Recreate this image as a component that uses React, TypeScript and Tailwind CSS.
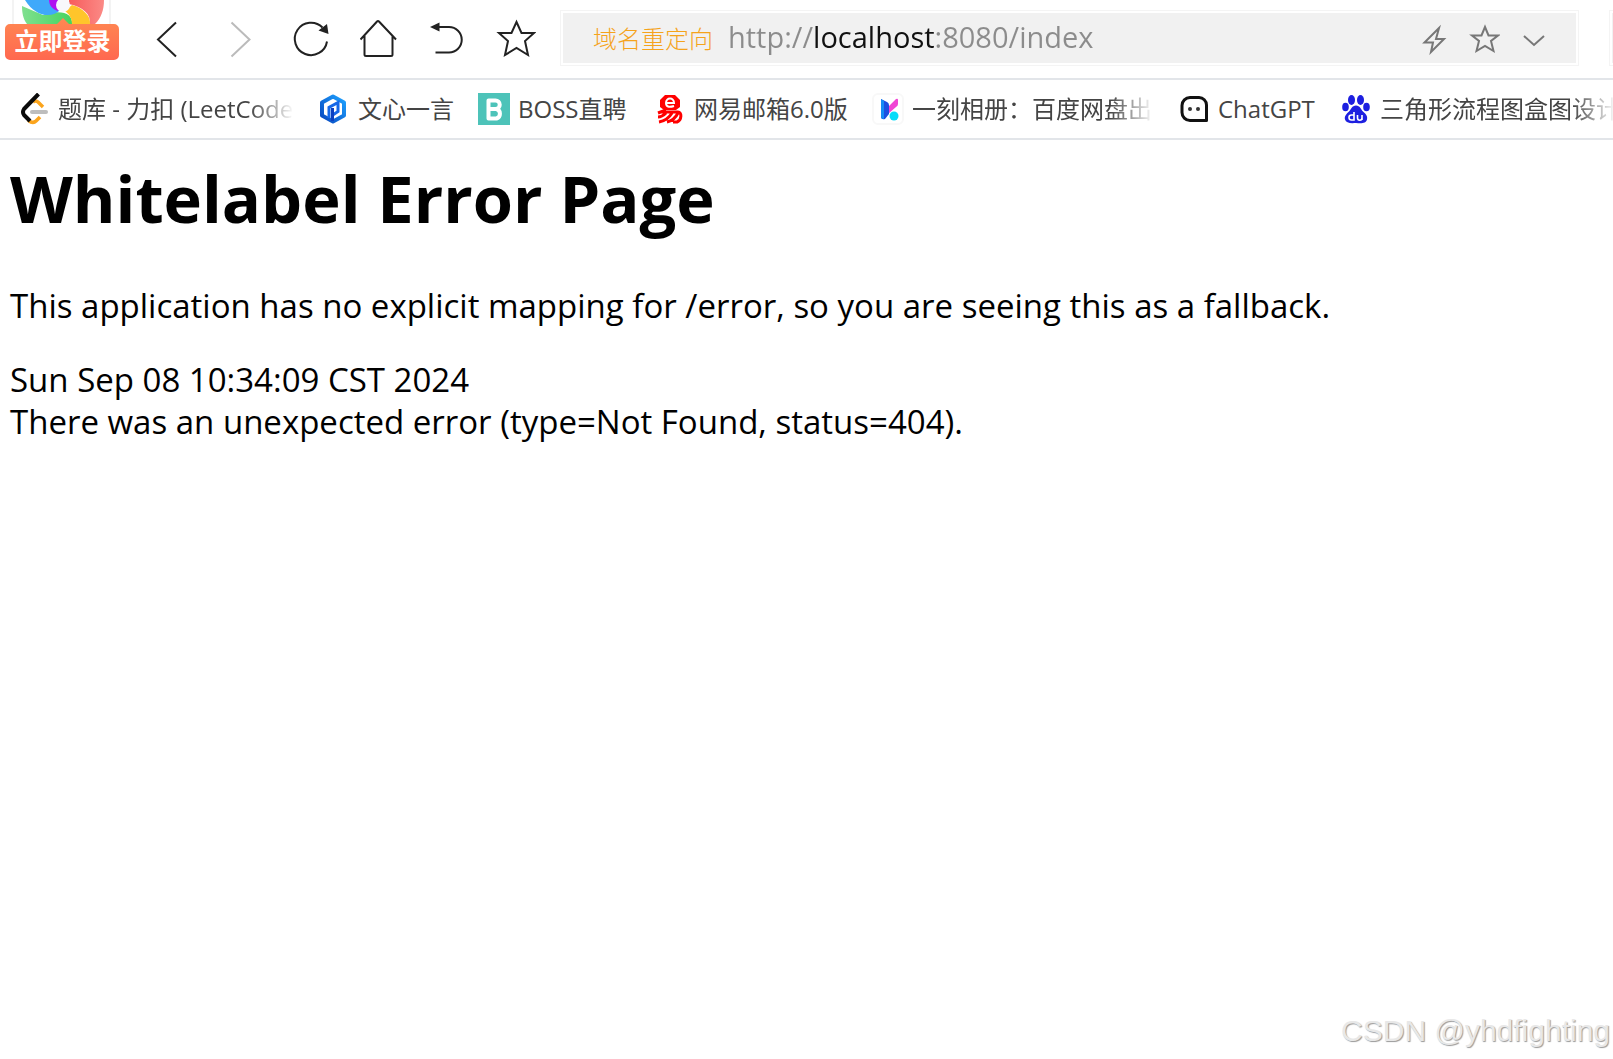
import type { ReactNode } from 'react';

function LeetCodeIcon() {
  return (
    <svg viewBox="0 0 32 32" className="size-8" fill="none">
      <path d="M10 27l3 2q3 1 5-1l4-4" stroke="#fba41c" strokeWidth="3.6" />
      <path d="M15 9q3-2 5 0l5 5" stroke="#fba41c" strokeWidth="3.4" />
      <path d="M20.500 1L6 16q-2 3 0 6l6 6" stroke="#0a0a0a" strokeWidth="4" strokeLinejoin="round" />
      <path d="M14 19h14" stroke="#bdbdbd" strokeWidth="4" strokeLinecap="round" />
    </svg>
  );
}

function WenxinIcon() {
  return (
    <svg viewBox="0 0 32 32" className="size-8">
      <defs>
        <linearGradient id="wenxin" x1="0" y1="1" x2="1" y2="0">
          <stop offset="0" stopColor="#0848c0" />
          <stop offset="1" stopColor="#1ea2ff" />
        </linearGradient>
      </defs>
      <path
        d="M15 3.500L26 9.500v13L15 28.500 4 22.500v-13z"
        fill="#fff"
        stroke="url(#wenxin)"
        strokeWidth="4"
        strokeLinejoin="round"
      />
      <path d="M11 25V14.500L20 9.500v9L14 22.500" fill="none" stroke="#1668e8" strokeWidth="3" />
      <path d="M14.500 15v13" stroke="#0b3fc0" strokeWidth="3" />
    </svg>
  );
}

function BossIcon() {
  return (
    <svg viewBox="0 0 32 32" className="size-8">
      <rect width="32" height="32" fill="#4dc3b9" />
      <path
        d="M10.500 7.500h7a4 4 0 0 1 0 8.500h-7zM10.500 16h8a5 5 0 0 1 0 9.500h-8z"
        fill="none"
        stroke="#fff"
        strokeWidth="4"
        strokeLinejoin="round"
      />
    </svg>
  );
}

function NeteaseIcon() {
  return (
    <svg viewBox="0 0 32 32" className="size-8" fill="none">
      <path d="M11 2h10l5 5v7l-4 3H10l-4-3V7z" fill="#f00" />
      <path d="M12 10h8c0-6-8-6-8 0 0 5 5 4 8 3" stroke="#fff" strokeWidth="2" />
      <path
        d="M4 20l8-3M8 19h16c4 0 4 8-1 10h-4M12 20c-2 2-4 4-8 4M18 20c-3 5-7 8-13 9M24 20c-2 4-6 8-11 9"
        stroke="#f00"
        strokeWidth="3"
      />
    </svg>
  );
}

function YikeIcon() {
  return (
    <svg viewBox="0 0 32 32" className="size-8">
      <rect x="1" y="1" width="30" height="30" rx="5" fill="#fff" stroke="#f8f8f8" strokeWidth="2" />
      <path d="M17 13l7-7q2-1 2 1v4q0 2-2 3l-8 7z" fill="#f044d4" />
      <path d="M9 6l6 3q2 1 2 3v9l-4 5q-4 1-4-2z" fill="#1d50e0" />
      <path d="M9 6l3 2v18q-3 0-3-3z" fill="#168bf5" />
      <circle cx="22" cy="23" r="4.500" fill="#06dcf9" />
    </svg>
  );
}

function ChatIcon() {
  return (
    <svg viewBox="0 0 32 32" className="size-8">
      <path
        d="M12 4.500h9a7.500 7.500 0 0 1 7.500 7.500v15.500H12a8 8 0 0 1-8-8V12.500a8 8 0 0 1 8-8z"
        fill="#fff"
        stroke="#111"
        strokeWidth="3"
        strokeLinejoin="round"
      />
      <circle cx="12" cy="16" r="2" fill="#333" />
      <circle cx="20" cy="16" r="2" fill="#333" />
    </svg>
  );
}

function BaiduIcon() {
  return (
    <svg viewBox="0 0 32 32" className="size-8" fill="#1d1fe0">
      <ellipse cx="11.500" cy="7" rx="3.500" ry="5" />
      <ellipse cx="20.500" cy="7" rx="3.500" ry="5" />
      <ellipse cx="5.500" cy="14" rx="3.300" ry="4.300" />
      <ellipse cx="26.500" cy="14" rx="3.300" ry="4.300" />
      <path d="M16 12.500c4 0 5 4 7 6s5 4 4 8-5 4-11 3.500C10 30.500 6 30 5 26.500s2-6 4-8 3-6 7-6z" />
      <path
        d="M14 19v8h-2.500a2.200 2.200 0 0 1 0-5H14M17.500 22v3c0 3 4.500 3 4.500 0v-3 5"
        fill="none"
        stroke="#fff"
        strokeWidth="1.600"
      />
    </svg>
  );
}

const bookmarks: { label: string; icon: ReactNode; width: string; fade?: boolean }[] = [
  { label: '题库 - 力扣 (LeetCode)', icon: <LeetCodeIcon />, width: 'w-[236px]', fade: true },
  { label: '文心一言', icon: <WenxinIcon />, width: 'w-24' },
  { label: 'BOSS直聘', icon: <BossIcon />, width: 'w-28' },
  { label: '网易邮箱6.0版', icon: <NeteaseIcon />, width: 'w-[154px]' },
  { label: '一刻相册：百度网盘出品', icon: <YikeIcon />, width: 'w-[242px]', fade: true },
  { label: 'ChatGPT', icon: <ChatIcon />, width: 'w-[98px]' },
  { label: '三角形流程图盒图设计', icon: <BaiduIcon />, width: 'w-[236px]', fade: true },
];

function NavButton({ label, children }: { label: string; children: ReactNode }) {
  return (
    <button type="button" aria-label={label} className="size-10 shrink-0">
      <svg viewBox="0 0 40 40" className="size-10" fill="none" stroke="#222" strokeWidth="2">
        {children}
      </svg>
    </button>
  );
}

function Account() {
  return (
    <button type="button" className="relative mr-9 h-[78px] w-[115px] shrink-0 self-start">
      <svg viewBox="0 0 115 78" className="absolute inset-0">
        <defs>
          <linearGradient id="badge" x1="0" y1="0" x2="0" y2="1">
            <stop offset="0" stopColor="#ff8852" />
            <stop offset="1" stopColor="#ff6850" />
          </linearGradient>
          <linearGradient id="leaf" x1="0" y1="0" x2="1" y2="0">
            <stop offset="0" stopColor="#7fe08f" />
            <stop offset="1" stopColor="#45d35f" />
          </linearGradient>
          <linearGradient id="rose" x1="0" y1="0" x2="1" y2="0">
            <stop offset="0" stopColor="#f75c5c" />
            <stop offset="1" stopColor="#fb8a86" />
          </linearGradient>
        </defs>
        <path d="M8 0v24M105 0v24" stroke="#f3f3f3" strokeWidth="2" />
        <path d="M17 6l21 9c18-6 30-2 29 9H22c-4-5-5-12-5-18z" fill="url(#leaf)" />
        <path d="M20 0h24c2 6 5 10 11 10-7 8-24 8-35-10z" fill="#3fa9fa" />
        <path d="M44 0h14l-5 11c-6-2-9-6-9-11z" fill="#b012f0" />
        <path d="M60 11l7-6c11 3 19 11 18 19H67c0-6-3-10-7-13z" fill="#ffc52b" />
        <path d="M64 0h35c0 10-3 18-9 24h-5c1-10-7-17-21-20z" fill="url(#rose)" />
        <circle cx="58" cy="5" r="7" fill="#f8f8fc" />
        <path
          d="M5 24h47l6-6 6 6h45a5 5 0 0 1 5 5v26a5 5 0 0 1-5 5H5a5 5 0 0 1-5-5V29a5 5 0 0 1 5-5z"
          fill="url(#badge)"
        />
      </svg>
      <span className="absolute inset-x-0 top-[23px] text-2xl leading-9 font-bold text-white">立即登录</span>
    </button>
  );
}

function Toolbar() {
  return (
    <div className="flex h-20 items-center border-b-2 border-[#e2e5e9] pl-[5px]">
      <Account />
      <nav className="flex shrink-0 gap-7">
        <NavButton label="后退">
          <path d="M20 3.500L2 20.500 20 37.500" />
        </NavButton>
        <NavButton label="前进">
          <path d="M7.500 3.500l18 17-18 17" stroke="#bbb" />
        </NavButton>
        <NavButton label="刷新">
          <path d="M35 22.500A16.200 16.200 0 1 1 30.500 8.500" />
          <path d="M26.500 11.500L35 5l1.500 10z" fill="#222" stroke="none" />
        </NavButton>
        <NavButton label="主页">
          <path d="M.5 20.500L17 2.500q1-1 2 0l17 18M4.500 17v18.500q0 1.500 1.500 1.500h25q1.500 0 1.500-1.500V17" />
        </NavButton>
        <NavButton label="恢复">
          <path d="M10 8h11a12.700 12.700 0 0 1 0 25.500H7.500" />
          <path d="M2 8l9.500-4.500v9z" fill="#222" stroke="none" />
        </NavButton>
        <NavButton label="收藏">
          <path d="M20.500 3l5 11H38l-9 8 3 14-11.500-7L9 36l3-14-9-8h12.500z" />
        </NavButton>
      </nav>
      <div className="mb-0.5 ml-6 flex h-14 min-w-0 grow items-center border border-[#f4f4f4] p-[2px]">
        <div className="flex h-[50px] min-w-0 grow items-center bg-[#f1f1f1] pr-[26px] pl-[30px]">
          <span className="shrink-0 pt-0.5 text-2xl font-light text-[#f5a31c]">域名重定向</span>
          <input
            type="text"
            aria-label="地址"
            defaultValue="http://localhost:8080/index"
            className="mb-0.5 ml-[15px] h-10 min-w-0 grow bg-[linear-gradient(90deg,#8c8c8c_86px,#111_86px,#111_207px,#8c8c8c_207px)] bg-clip-text text-[29px] text-transparent outline-none"
          />
          <div className="flex shrink-0 gap-[18px] pt-0.5">
            <button type="button" aria-label="极速模式">
              <svg viewBox="0 0 32 32" className="size-8" fill="none" stroke="#777" strokeWidth="2">
                <path d="M21 5L6.500 19.500H15L13 29l13-13h-8z" />
              </svg>
            </button>
            <button type="button" aria-label="添加收藏">
              <svg viewBox="0 0 32 32" className="size-8" fill="none" stroke="#777" strokeWidth="2">
                <path d="M17 4l3.500 8.500H30L23 18l2.500 10L17 23l-8.500 5L11 18l-7-5.500h9.500z" />
              </svg>
            </button>
            <button type="button" aria-label="展开">
              <svg viewBox="0 0 32 32" className="size-8" fill="none" stroke="#777" strokeWidth="2">
                <path d="M6 13l10 9 10-9" />
              </svg>
            </button>
          </div>
        </div>
      </div>
      <div className="mb-0.5 ml-[30px] h-14 w-1 shrink-0 border border-r-0 border-[#f4f4f4] p-[2px] pr-0">
        <div className="h-full bg-[#f1f1f1]" />
      </div>
    </div>
  );
}

function BookmarkBar() {
  return (
    <nav className="flex h-[60px] items-center gap-6 overflow-hidden border-b-2 border-[#e2e5e9] pl-[18px]">
      {bookmarks.map(({ label, icon, width, fade }) => (
        <a key={label} href="#" className="flex shrink-0 items-center gap-2 text-2xl text-[#444]">
          {icon}
          <span
            className={`${width} overflow-hidden whitespace-nowrap ${
              fade ? 'mask-r-from-[calc(100%-44px)] mask-r-to-100%' : ''
            }`}
          >
            {label}
          </span>
        </a>
      ))}
    </nav>
  );
}

export default function App() {
  return (
    <div className="flex min-h-screen flex-col bg-white font-['Open_Sans','Noto_Sans_CJK_SC',sans-serif]">
      <Toolbar />
      <BookmarkBar />
      <main className="px-[10px] pt-[14px] text-[33px] leading-[42px] text-black">
        <h1 className="text-[65px] leading-[88px] font-bold">Whitelabel Error Page</h1>
        <p className="mt-[43px]">
          This application has no explicit mapping for /error, so you are seeing this as a fallback.
        </p>
        <div className="mt-8">Sun Sep 08 10:34:09 CST 2024</div>
        <div>There was an unexpected error (type=Not Found, status=404).</div>
      </main>
      <div className="mt-auto self-end pr-[3px] pb-2 font-['Liberation_Sans',sans-serif] text-[30px] leading-10 text-[#e8e8e8] [text-shadow:1px_1px_1px_#999]">
        CSDN @yhdfighting
      </div>
    </div>
  );
}
